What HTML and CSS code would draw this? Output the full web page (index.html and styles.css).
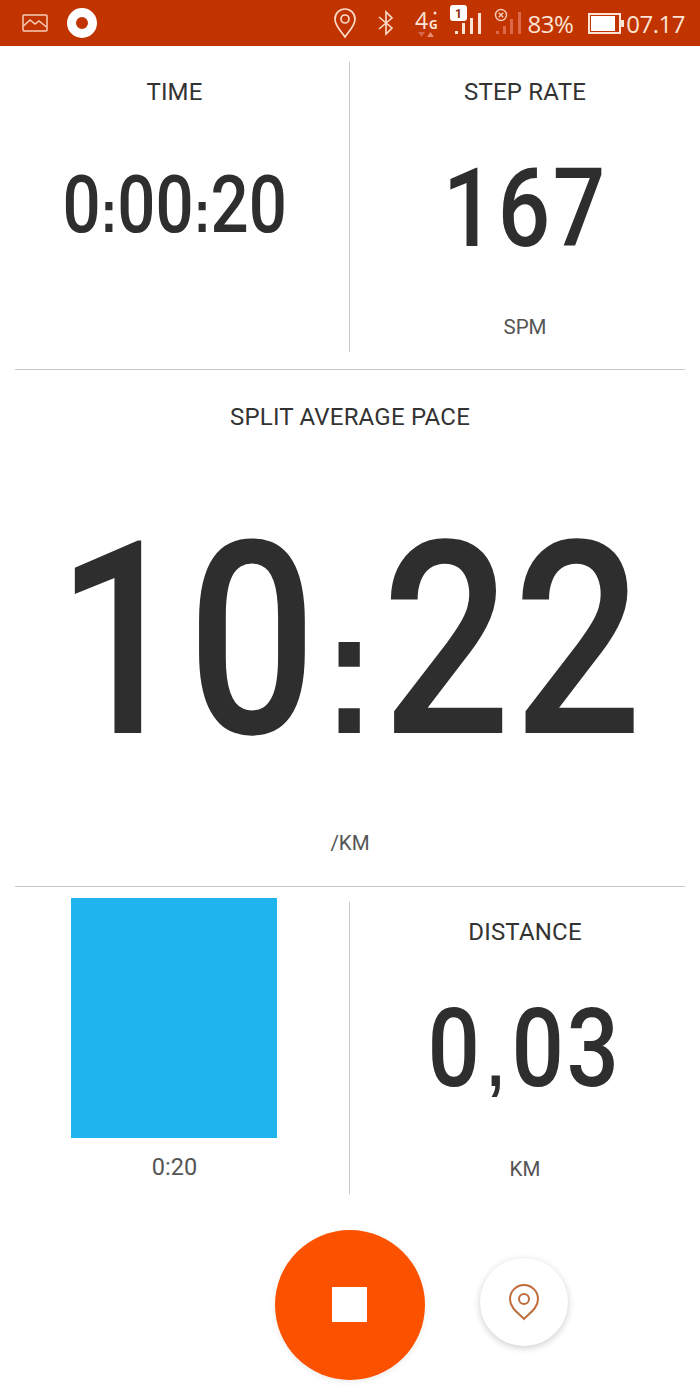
FILE: index.html
```html
<!DOCTYPE html>
<html lang="en">
<head>
    <meta charset="UTF-8">
    <meta name="viewport" content="width=device-width, initial-scale=1.0">
    <title>Recording</title>
    <link rel="stylesheet" href="styles.css">
</head>
<body>
    <div class="status">
        <svg class="ico-picture" width="26" height="20" viewBox="0 0 26 20" fill="none" stroke="#f6cdb8" stroke-width="1.5">
            <rect x="1" y="2" width="24" height="16" rx="1"/>
            <path d="M1.5 13 L8 7 L13 11 L17 8 L24.5 14"/>
        </svg>
        <span class="record-dot"></span>
        <span class="status-space"></span>
        <svg class="ico-pin" width="24" height="32" viewBox="0 0 24 32" fill="none" stroke="#fbdccb" stroke-width="1.7">
            <path d="M12 30 C8 24 2 19 2 12 A10 10 0 0 1 22 12 C22 19 16 24 12 30 Z"/>
            <circle cx="12" cy="12" r="4"/>
        </svg>
        <svg class="ico-bt" width="18" height="26" viewBox="0 0 18 26" fill="none" stroke="#fbdccb" stroke-width="1.6">
            <path d="M2 7 L15 18 L9 24 V2 L15 8 L2 19"/>
        </svg>
        <svg class="ico-net" width="28" height="36" viewBox="0 0 28 36">
            <text x="0" y="24" class="net-four">4</text>
            <text x="14" y="24" class="net-g">G</text>
            <circle cx="20" cy="8" r="1.5" fill="#fbe3d5"/>
            <path d="M3 27 H10 L6.500 32 Z" fill="#d9654a"/>
            <path d="M12 32 H19 L15.500 27 Z" fill="#e98d72"/>
        </svg>
        <svg class="ico-signal" width="32" height="36" viewBox="0 0 32 36">
            <rect x="5" y="26" width="3" height="3" fill="#fbe3d5"/>
            <rect x="12" y="18" width="3" height="11" fill="#fbe3d5"/>
            <rect x="20" y="13" width="3" height="16" fill="#fbe3d5"/>
            <rect x="28" y="8" width="3" height="21" fill="#fbe3d5"/>
            <rect x="0" y="0" width="17" height="16" rx="3" fill="#fff"/>
            <text x="8.500" y="12.500" class="sim-no">1</text>
        </svg>
        <svg class="ico-signal2" width="29" height="36" viewBox="0 0 29 36" fill="none">
            <circle cx="8" cy="10" r="5.500" stroke="#f6cdb8" stroke-width="1.400"/>
            <path d="M5.800 7.800 L10.200 12.200 M10.200 7.800 L5.800 12.200" stroke="#f6cdb8" stroke-width="1.400"/>
            <g fill="#dc6a4a">
                <rect x="3" y="26" width="3" height="3"/>
                <rect x="10" y="21" width="3" height="8"/>
                <rect x="17" y="14" width="3" height="15"/>
                <rect x="25" y="7" width="3" height="22"/>
            </g>
        </svg>
        <span class="status-text pct">83%</span>
        <span class="battery"><span class="battery-fill"></span></span>
        <span class="status-text">07.17</span>
    </div>

    <div class="row row-top">
        <div class="cell">
            <div class="label">TIME</div>
            <div class="value value-time"><span class="num">0<span class="sep">:</span>00<span class="sep">:</span>20</span></div>
        </div>
        <div class="cell cell-right">
            <div class="label">STEP RATE</div>
            <div class="value value-big"><span class="num">167</span></div>
            <div class="unit">SPM</div>
        </div>
    </div>
    <div class="rule"></div>

    <div class="row-mid">
        <div class="label">SPLIT AVERAGE PACE</div>
        <div class="value-huge"><span class="num">10<span class="sep">:</span>22</span></div>
        <div class="unit">/KM</div>
    </div>
    <div class="rule"></div>

    <div class="row row-bottom">
        <div class="cell cell-chart">
            <div class="bar"></div>
            <div class="unit bar-time">0:20</div>
        </div>
        <div class="cell cell-right">
            <div class="label">DISTANCE</div>
            <div class="value value-big"><span class="num">0<span class="sep comma">,</span>03</span></div>
            <div class="unit">KM</div>
        </div>
    </div>

    <div class="actions">
        <button class="btn-stop"><span class="stop-square"></span></button>
        <button class="btn-map">
            <svg width="32" height="38" viewBox="0 0 32 38" fill="none" stroke="#bd6c3a" stroke-width="2">
                <path d="M16 36 C12 31 2 26 2 16 A14 14 0 0 1 30 16 C30 26 20 31 16 36 Z"/>
                <circle cx="16" cy="16" r="5"/>
            </svg>
        </button>
    </div>
</body>
</html>
```

FILE: styles.css
```css
* {
    box-sizing: border-box;
}

body {
    margin: 0;
    width: 700px;
    height: 1400px;
    overflow: hidden;
    background-color: #fff;
    font-family: Roboto, sans-serif;
    color: #2e2e2e;
}

/* status bar */
.status {
    height: 46px;
    display: flex;
    align-items: center;
    padding: 0 15px 0 22px;
    background-color: #c13400;
    color: #fbe3d5;
}

.record-dot {
    width: 30px;
    height: 30px;
    margin-left: 19px;
    border: 9px solid #fff;
    border-radius: 50%;
}

.status-space {
    flex: 1;
}

.ico-pin {
    margin-left: -3px;
}

.ico-bt {
    margin-left: 20px;
    margin-right: 3px;
}

.ico-net {
    margin-left: 17px;
}

.net-four {
    font: 400 23px "Open Sans", sans-serif;
    fill: #fbe3d5;
}

.net-g {
    font: 700 12px "Open Sans", sans-serif;
    fill: #fbe3d5;
}

.ico-signal {
    margin-left: 7px;
}

.sim-no {
    font: bold 12px Roboto, sans-serif;
    text-anchor: middle;
    fill: #8a2a00;
}

.ico-signal2 {
    margin-left: 11px;
}

.pct {
    margin-left: 6px;
}

.status-text {
    font-family: "Open Sans", sans-serif;
    font-size: 24px;
    letter-spacing: -0.5px;
}

.battery {
    width: 33px;
    height: 21px;
    margin: 0 5px 0 15px;
    border: 2px solid #fbe3d5;
    padding: 1px 4px 1px 1px;
    position: relative;
}

.battery::after {
    content: "";
    position: absolute;
    right: -5px;
    top: 5px;
    width: 3px;
    height: 7px;
    background-color: #fbe3d5;
}

.battery-fill {
    display: block;
    height: 100%;
    background-color: #fff;
}

/* metric rows */
.row {
    display: grid;
    grid-template-columns: 349px 351px;
}

.rule {
    height: 1px;
    margin: 0 15px;
    background-color: #c8c8c8;
}

.row-top {
    height: 323px;
    padding: 16px 0 17px;
}

.row-bottom {
    height: 308px;
    padding: 15px 0 1px;
}

.cell {
    display: flex;
    flex-direction: column;
    align-items: center;
}

.cell-right {
    border-left: 1px solid #c8c8c8;
}

.label {
    margin-top: 16px;
    font-size: 24px;
    line-height: 28px;
    letter-spacing: .2px;
    color: #333;
}

.unit {
    font-size: 20.5px;
    line-height: 24px;
    color: #555;
}

.num {
    display: inline-block;
    font-weight: 500;
    transform: scaleX(.84);
}

.sep {
    font-family: "Liberation Sans", sans-serif;
    font-weight: 700;
}

.value {
    flex: 1;
    text-align: center;
}

.value-time {
    margin-top: 52px;
    font-size: 80px;
    line-height: 94px;
}

.value-time .sep {
    font-size: 60px;
}

.value-big {
    margin-top: 35px;
    font-size: 110px;
    line-height: 136px;
    letter-spacing: 3px;
}

.comma {
    font-size: 70px;
    margin: 0 6px;
}

.cell-right .unit {
    margin-bottom: 13px;
}

.row-mid {
    height: 516px;
    display: flex;
    flex-direction: column;
    align-items: center;
    padding-top: 17px;
}

.value-huge {
    flex: 1;
    margin-top: 50px;
    font-size: 270px;
    line-height: 320px;
    letter-spacing: 3px;
}

.value-huge .sep {
    font-size: 180px;
    margin: 0 6px;
}

.row-mid .unit {
    margin-bottom: 31px;
}

.cell-chart {
    margin-top: -4px;
}

.bar {
    width: 206px;
    height: 240px;
    margin-right: 1px;
    background-color: #20b4ee;
}

.bar-time {
    margin-top: 17px;
    font-size: 23.5px;
}

/* bottom buttons */
.actions {
    position: relative;
    height: 150px;
    margin-top: 35px;
    display: flex;
    justify-content: center;
}

.btn-stop {
    width: 150px;
    height: 150px;
    border: none;
    border-radius: 50%;
    background-color: #fc5200;
    display: flex;
    align-items: center;
    justify-content: center;
    box-shadow: 0 2px 6px rgba(0, 0, 0, .08);
}

.stop-square {
    width: 35px;
    height: 35px;
    margin: 0 2px 2px 0;
    background-color: #fff;
}

.btn-map {
    position: absolute;
    left: 480px;
    top: 28px;
    width: 88px;
    height: 88px;
    border: none;
    border-radius: 50%;
    background-color: #fff;
    display: flex;
    align-items: center;
    justify-content: center;
    box-shadow: 0 2px 7px rgba(0, 0, 0, .2);
}
```
